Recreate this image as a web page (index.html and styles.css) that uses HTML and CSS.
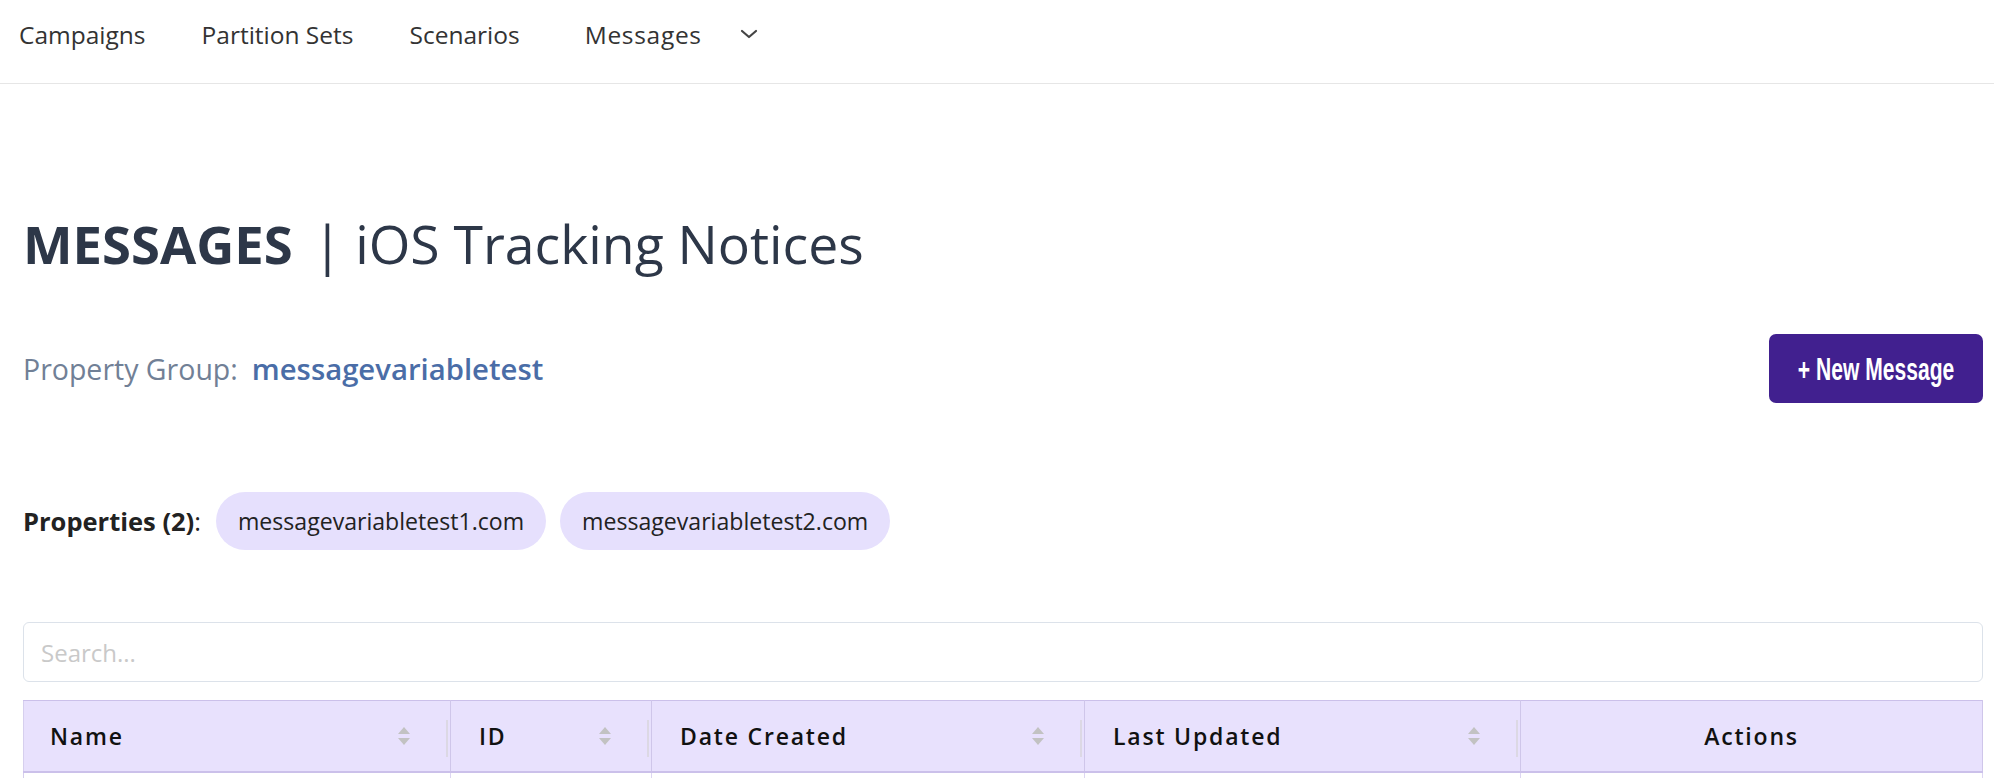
FILE: index.html
```html
<!DOCTYPE html>
<html lang="en">
<head>
<meta charset="utf-8">
<title>Messages | iOS Tracking Notices</title>
<link rel="stylesheet" href="styles.css">
</head>
<body>
<nav class="topnav">
  <a class="nav-item">Campaigns</a>
  <a class="nav-item">Partition Sets</a>
  <a class="nav-item">Scenarios</a>
  <a class="nav-item nav-dropdown"><span class="nav-msg">Messages</span><svg class="chevron" width="18" height="10" viewBox="0 0 18 10"><path d="M2 2 L9 8 L16 2" fill="none" stroke="#444" stroke-width="2.2" stroke-linecap="round" stroke-linejoin="round"/></svg></a>
</nav>
<main class="page">
  <h1 class="title"><span class="title-strong">MESSAGES</span><span class="title-sep">|</span><span class="title-sub">iOS Tracking Notices</span></h1>
  <div class="group-row">
    <div class="group"><span class="group-label">Property Group:</span><span class="group-value">messagevariabletest</span></div>
    <button class="btn-new"><span class="btn-label">+ New Message</span></button>
  </div>
  <div class="props-row">
    <span class="props-label"><b>Properties (2)</b>:</span>
    <span class="pill">messagevariabletest1.com</span>
    <span class="pill">messagevariabletest2.com</span>
  </div>
  <input class="search" type="text" placeholder="Search...">
  <table class="grid">
    <colgroup>
      <col class="c-name"><col class="c-id"><col class="c-date"><col class="c-upd"><col class="c-act">
    </colgroup>
    <thead>
      <tr>
        <th class="sortable first">Name<svg class="sort" width="14" height="22" viewBox="0 0 14 22"><polygon points="1,9 7,2 13,9" /><polygon points="1,13 7,20 13,13" /></svg></th>
        <th class="sortable">ID<svg class="sort" width="14" height="22" viewBox="0 0 14 22"><polygon points="1,9 7,2 13,9" /><polygon points="1,13 7,20 13,13" /></svg></th>
        <th class="sortable">Date Created<svg class="sort" width="14" height="22" viewBox="0 0 14 22"><polygon points="1,9 7,2 13,9" /><polygon points="1,13 7,20 13,13" /></svg></th>
        <th class="sortable">Last Updated<svg class="sort" width="14" height="22" viewBox="0 0 14 22"><polygon points="1,9 7,2 13,9" /><polygon points="1,13 7,20 13,13" /></svg></th>
        <th class="center">Actions</th>
      </tr>
    </thead>
    <tbody>
      <tr><td></td><td></td><td></td><td></td><td></td></tr>
    </tbody>
  </table>
</main>
</body>
</html>
```
FILE: styles.css
```css
body {
  margin: 0;
  background: #fff;
  font-family: "Open Sans", "Noto Sans", sans-serif;
  color: #2d3748;
}

.topnav {
  display: flex;
  align-items: flex-start;
  gap: 56px;
  height: 65px;
  padding: 18px 0 0 19px;
  border-bottom: 1px solid #e6e6e6;
}

.nav-item {
  font-size: 24.5px;
  line-height: 33px;
  color: #333;
  text-decoration: none;
}

.nav-dropdown {
  display: flex;
  align-items: center;
  margin-left: 9px;
}

.nav-msg {
  letter-spacing: 0.7px;
}

.chevron {
  margin-left: 38px;
  margin-top: -2px;
}

.page {
  padding: 0 11px 0 23px;
}

.title {
  margin: 125px 0 0;
  font-size: 53.5px;
  line-height: 70px;
  font-weight: 400;
  color: #2d3748;
}

.title-strong {
  font-weight: 700;
  font-size: 52.6px;
}

.title-sep {
  margin: 0 13px 0 20px;
}

.group-row {
  display: flex;
  justify-content: space-between;
  align-items: center;
  margin-top: 55px;
}

.group-label {
  font-size: 28.5px;
  color: #718096;
}

.group-value {
  margin-left: 14px;
  font-size: 29.3px;
  font-weight: 600;
  color: #4a6da7;
}

.btn-new {
  display: flex;
  align-items: center;
  justify-content: center;
  width: 214px;
  height: 69px;
  border: none;
  border-radius: 7px;
  background: #41208f;
  color: #fff;
  padding: 0;
}

.btn-label {
  display: inline-block;
  margin-top: 2px;
  font-family: "Liberation Sans", Arial, sans-serif;
  font-weight: 700;
  font-size: 31px;
  white-space: nowrap;
  transform: scaleX(0.68);
}

.props-row {
  display: flex;
  align-items: center;
  gap: 14px;
  margin-top: 89px;
}

.props-label {
  font-size: 25.5px;
  color: #222;
  margin-right: 1px;
}

.props-label b {
  font-weight: 700;
}

.pill {
  height: 58px;
  line-height: 58px;
  padding: 0 22px;
  border-radius: 29px;
  background: #e6e0fd;
  font-size: 23.1px;
  color: #222;
}

.search {
  display: block;
  box-sizing: border-box;
  width: 100%;
  height: 60px;
  margin-top: 72px;
  padding: 0 17px;
  border: 1px solid #dce2ea;
  border-radius: 6px;
  font-family: "Open Sans", sans-serif;
  font-size: 24px;
  color: #333;
  outline: none;
}

.search::placeholder {
  color: #c9c9c9;
}

.grid {
  width: 100%;
  margin-top: 18px;
  border-collapse: collapse;
  table-layout: fixed;
  border-left: 1px solid #d6cfee;
  border-right: 1px solid #d6cfee;
}

.c-name { width: 427px; }
.c-id { width: 201px; }
.c-date { width: 433px; }
.c-upd { width: 436px; }

.grid th {
  position: relative;
  height: 70px;
  padding: 0 28px;
  background: #e8e1fd;
  border-top: 1px solid #cbc0ea;
  border-bottom: 2px solid #cbc0ea;
  border-right: 1px solid #cfc6ea;
  text-align: left;
  font-size: 23px;
  font-weight: 600;
  letter-spacing: 1.8px;
  color: #111;
}

.grid th.first {
  padding-left: 26px;
}

.grid th.center {
  text-align: center;
}

.grid th.sortable::after {
  content: "";
  position: absolute;
  right: 2px;
  top: 19px;
  width: 2px;
  height: 37px;
  background: #dcd8e4;
}

.sort {
  position: absolute;
  right: 39px;
  top: 50%;
  margin-top: -11px;
  fill: #c2c2c2;
}

.grid td {
  height: 60px;
  border-right: 1px solid #ddd6f2;
}
```
